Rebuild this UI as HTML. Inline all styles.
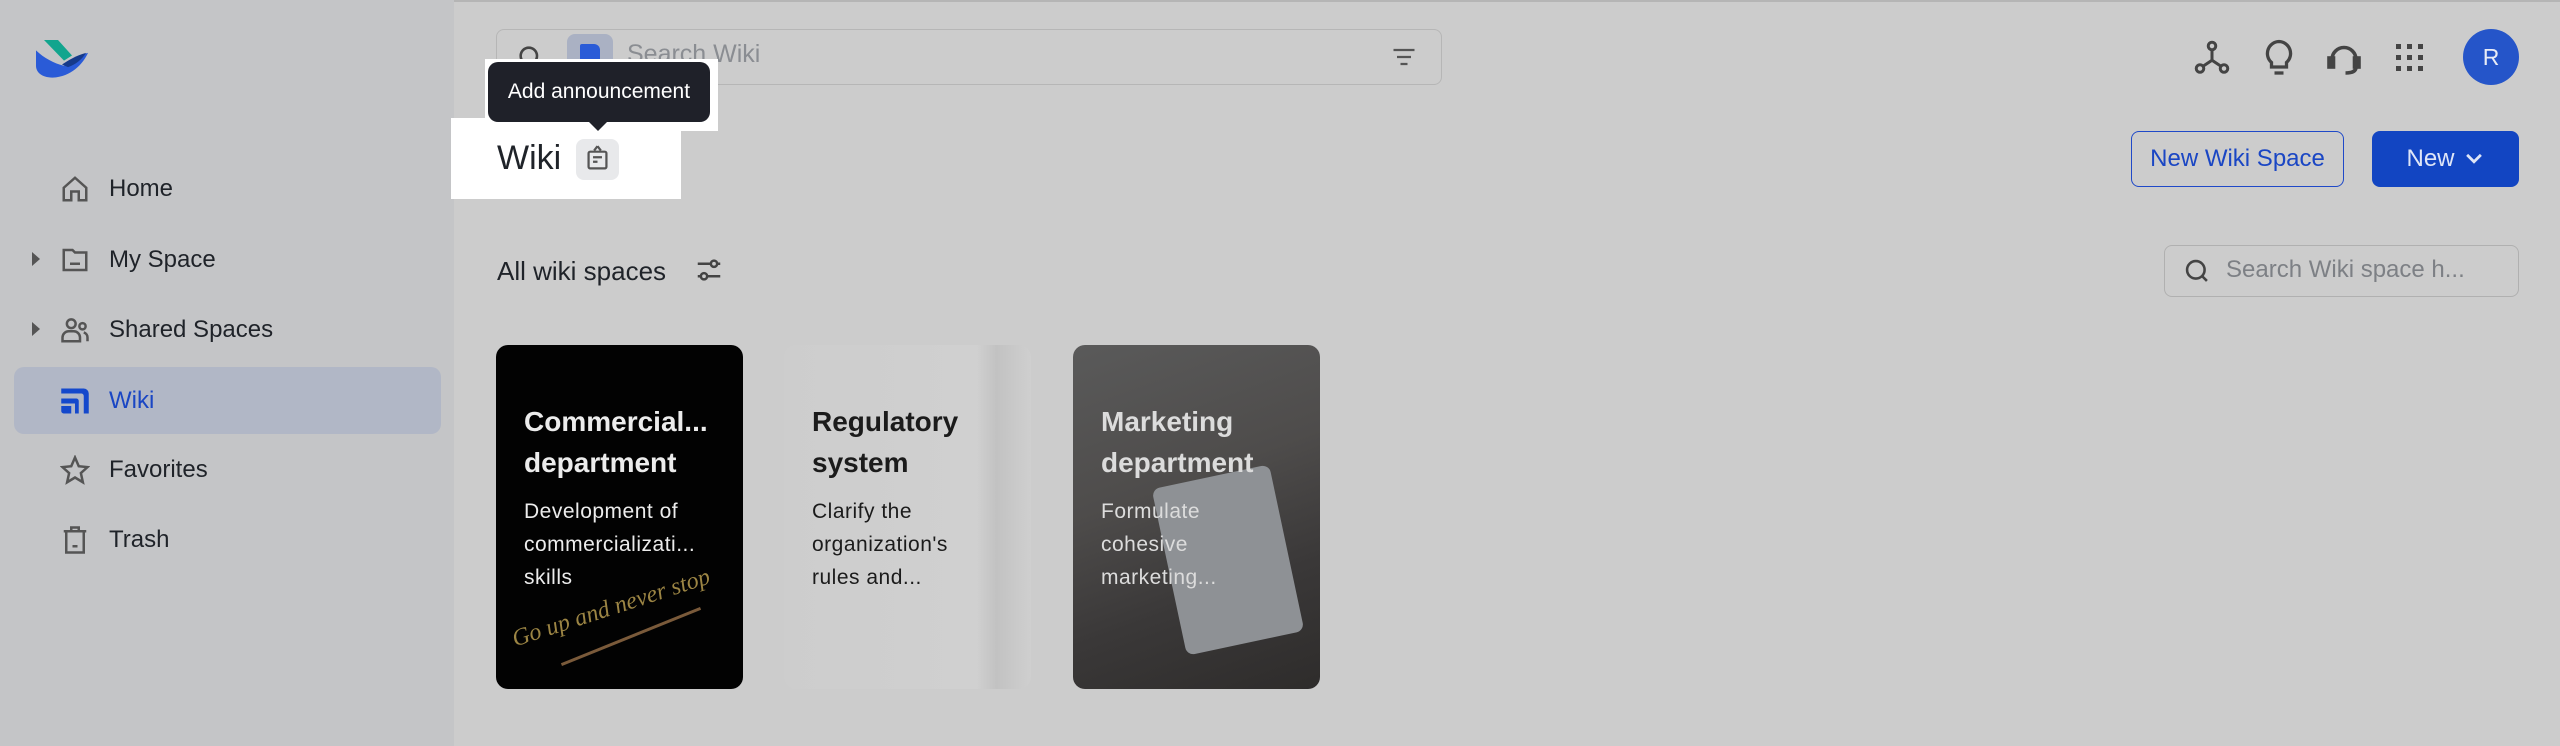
<!DOCTYPE html>
<html><head><meta charset="utf-8"><style>
*{box-sizing:border-box;margin:0;padding:0}
body{width:2560px;height:746px;overflow:hidden;background:#cccccc;font-family:"Liberation Sans",sans-serif;position:relative;color:#1f2329}
.abs{position:absolute}
#side{left:0;top:0;width:454px;height:746px;background:#c4c5c7}
.topline{left:0;top:0;width:2560px;height:2px;background:#b5b5b5}
.nav{position:absolute;left:0;width:454px;height:67px;display:flex;align-items:center;font-size:24px;color:#1f2329}
.nav .ic{position:absolute;left:60px;top:50%;transform:translateY(-50%);width:30px;height:30px}
.nav span{position:absolute;left:109px}
.arrow{position:absolute;left:32px;width:0;height:0;border-top:7px solid transparent;border-bottom:7px solid transparent;border-left:8px solid #555}
.card{position:absolute;top:345px;width:247px;height:344px;border-radius:12px;overflow:hidden;padding:56px 28px 0}
.card h3{font-size:28px;font-weight:bold;line-height:41px;margin-bottom:12px}
.card p{font-size:21px;line-height:33px;letter-spacing:.5px}
</style></head><body>
<div class="abs topline"></div>
<div id="side" class="abs">
 <svg class="abs" style="left:36px;top:40px" width="52" height="40" viewBox="0 0 52 62" preserveAspectRatio="none"><path d="M8 0h14l14 24 -8 8z" fill="#12a58e"/><path d="M0 16c8 12 18 20 28 24l8-6c4-6 10-12 16-14-4 14-14 34-32 38C6 60 0 50 0 40z" fill="#2a5bd7"/><path d="M26 38c6-6 14-14 24-18-4 10-10 18-18 22z" fill="#163a8a"/></svg>
 <div class="nav" style="top:155px"><svg class="ic" viewBox="0 0 24 24" fill="none" stroke="#555" stroke-width="2"><path d="M3 11l9-8 9 8v10h-6v-7H9v7H3z"/></svg><span>Home</span></div>
 <div class="nav" style="top:226px"><i class="arrow" style="top:26px"></i><svg class="ic" viewBox="0 0 24 24" fill="none" stroke="#555" stroke-width="2"><path d="M3 4h7l2 2h9v14H3z"/><path d="M8 15h8"/></svg><span>My Space</span></div>
 <div class="nav" style="top:296px"><i class="arrow" style="top:26px"></i><svg class="ic" viewBox="0 0 24 24" fill="none" stroke="#555" stroke-width="2"><circle cx="9" cy="7" r="3.5"/><path d="M2 21v-3a5 5 0 0 1 5-5h4a5 5 0 0 1 5 5v3z"/><circle cx="18" cy="9" r="2.5"/><path d="M19 14a4 4 0 0 1 3 4v3"/></svg><span>Shared Spaces</span></div>
 <div class="abs" style="left:14px;top:367px;width:427px;height:67px;background:#b1b7c6;border-radius:10px"></div>
 <div class="nav" style="top:367px;color:#1a46c4"><svg class="ic" viewBox="0 0 24 24"><path d="M1 2h18a4 4 0 0 1 4 4v16h-4V8a2 2 0 0 0-2-2H1z M1 10h12a2 2 0 0 1 2 2v10h-3V14H1z M1 16h8v6H3a2 2 0 0 1-2-2z" fill="#1448cc"/></svg><span>Wiki</span></div>
 <div class="nav" style="top:436px"><svg class="ic" viewBox="0 0 24 24" fill="none" stroke="#555" stroke-width="2"><path d="M12 2l3 7 7 .7-5.3 4.8 1.6 7.3L12 18l-6.3 3.8 1.6-7.3L2 9.7 9 9z"/></svg><span>Favorites</span></div>
 <div class="nav" style="top:506px"><svg class="ic" viewBox="0 0 24 24" fill="none" stroke="#555" stroke-width="2"><path d="M3 5h18M9 5V2h6v3M5 5v17h14V5M10 17h4"/></svg><span>Trash</span></div>
</div>

<!-- search bar -->
<div class="abs" style="left:496px;top:29px;width:946px;height:56px;border:1.5px solid #b6b6b6;border-radius:8px"></div>
<svg class="abs" style="left:516px;top:43px" width="28" height="28" viewBox="0 0 24 24" fill="none" stroke="#444" stroke-width="2.2"><circle cx="11" cy="11" r="7"/><path d="M16 16l5 5"/></svg>
<div class="abs" style="left:567px;top:34px;width:46px;height:46px;background:#aab1c3;border-radius:8px"></div>
<div class="abs" style="left:580px;top:44px;width:20px;height:26px;background:#2a5bd7;border-radius:2px 6px 2px 2px"></div>
<div class="abs" style="left:627px;top:40px;font-size:25px;color:#8a8d92">Search Wiki</div>
<svg class="abs" style="left:1390px;top:43px" width="28" height="28" viewBox="0 0 24 24" stroke="#555" stroke-width="2"><path d="M3 6h18M6 12h12M9 18h6"/></svg>

<!-- spotlight -->
<div class="abs" style="left:451px;top:118px;width:230px;height:81px;background:#fff"></div>
<div class="abs" style="left:485px;top:59px;width:233px;height:72px;background:#fff"></div>
<div class="abs" style="left:488px;top:62px;width:222px;height:60px;background:#1f2129;border-radius:10px;color:#fff;font-size:21px;display:flex;align-items:center;justify-content:center">Add announcement</div>
<div class="abs" style="left:588px;top:121px;width:0;height:0;border-left:10px solid transparent;border-right:10px solid transparent;border-top:10px solid #1f2129"></div>
<div class="abs" style="left:497px;top:139px;font-size:34px;color:#1f2329">Wiki</div>
<div class="abs" style="left:576px;top:139px;width:43px;height:41px;background:#e8e9eb;border-radius:8px"></div>
<svg class="abs" style="left:585px;top:145px" width="25" height="29" viewBox="0 0 20 26" fill="none" stroke="#555" stroke-width="2"><path d="M10 1l-3 4M10 1l3 4"/><rect x="2" y="6" width="16" height="15" rx="1.5"/><path d="M6 11h8M6 15h4"/></svg>

<!-- top right icons -->
<svg class="abs" style="left:2194px;top:40px" width="36" height="36" viewBox="0 0 24 24" fill="none" stroke="#444" stroke-width="2"><circle cx="12" cy="4" r="2.5"/><circle cx="4" cy="19" r="2.5"/><circle cx="20" cy="19" r="2.5"/><path d="M12 6.5v7M12 13.5L6 17.5M12 13.5l6 4"/></svg>
<svg class="abs" style="left:2261px;top:38px" width="36" height="40" viewBox="0 0 24 26" fill="none" stroke="#444" stroke-width="2.2"><path d="M12 2a8 8 0 0 0-5 14v3h10v-3A8 8 0 0 0 12 2z"/><path d="M9 23h6"/></svg>
<svg class="abs" style="left:2326px;top:40px" width="36" height="36" viewBox="0 0 24 24" fill="none" stroke="#444" stroke-width="2.4"><path d="M4 13a8 8 0 0 1 16 0"/><rect x="2" y="12" width="3" height="6" fill="#444"/><rect x="19" y="12" width="3" height="6" fill="#444"/><path d="M20 18c0 3-3 4-7 4"/></svg>
<svg class="abs" style="left:2395px;top:43px" width="30" height="30" viewBox="0 0 30 30" fill="#444"><rect x="1" y="1" width="5" height="5"/><rect x="12" y="1" width="5" height="5"/><rect x="23" y="1" width="5" height="5"/><rect x="1" y="12" width="5" height="5"/><rect x="12" y="12" width="5" height="5"/><rect x="23" y="12" width="5" height="5"/><rect x="1" y="23" width="5" height="5"/><rect x="12" y="23" width="5" height="5"/><rect x="23" y="23" width="5" height="5"/></svg>
<div class="abs" style="left:2463px;top:29px;width:56px;height:56px;border-radius:50%;background:#2555c9;color:#e8ecf6;font-size:23px;display:flex;align-items:center;justify-content:center">R</div>

<div class="abs" style="left:2131px;top:131px;width:213px;height:56px;border:1.5px solid #1f49c8;border-radius:8px;color:#1a46c4;font-size:24px;display:flex;align-items:center;justify-content:center">New Wiki Space</div>
<div class="abs" style="left:2372px;top:131px;width:147px;height:56px;background:#1245c2;border-radius:8px;color:#dfe6f7;font-size:24px;display:flex;align-items:center;justify-content:center">New <svg width="22" height="14" viewBox="0 0 16 10" style="margin-left:8px" fill="none" stroke="#dfe6f7" stroke-width="2"><path d="M3 2l5 5 5-5"/></svg></div>

<div class="abs" style="left:497px;top:256px;font-size:26px;color:#1f2329">All wiki spaces</div>
<svg class="abs" style="left:694px;top:255px" width="30" height="30" viewBox="0 0 24 24" fill="none" stroke="#444" stroke-width="2"><path d="M3 7h10M19 7h2M3 17h2M11 17h10"/><circle cx="16" cy="7" r="2.5"/><circle cx="8" cy="17" r="2.5"/></svg>

<div class="abs" style="left:2164px;top:245px;width:355px;height:52px;border:1.5px solid #b0b0b0;border-radius:8px"></div>
<svg class="abs" style="left:2183px;top:257px" width="28" height="28" viewBox="0 0 24 24" fill="none" stroke="#444" stroke-width="2.2"><circle cx="11" cy="11" r="7.5"/><path d="M16.5 16.5l4 4"/></svg>
<div class="abs" style="left:2226px;top:256px;font-size:24px;color:#7d8085">Search Wiki space h...</div>

<!-- cards -->
<div class="card" style="left:496px;background:#020202;color:#ececec">
 <h3>Commercial...<br>department</h3>
 <p>Development of<br>commercializati...<br>skills</p>
 <div class="abs" style="left:12px;top:250px;font-size:24px;color:#9c8544;font-style:italic;transform:rotate(-18deg);font-family:'Liberation Serif',serif">Go up and never stop</div>
 <div class="abs" style="left:60px;top:290px;width:150px;height:3px;background:#7a5a3a;transform:rotate(-22deg)"></div>
</div>
<div class="card" style="left:784px;background:linear-gradient(90deg,#cdcdcd 0%,#d0d0d0 78%,#c2c2c2 86%,#cfcfcf 100%);color:#1b1b1b">
 <h3>Regulatory<br>system</h3>
 <p>Clarify the<br>organization's<br>rules and...</p>
</div>
<div class="card" style="left:1073px;background:linear-gradient(160deg,#5a5a5a 0%,#4e4c4b 40%,#3a3838 70%,#2e2c2b 100%);color:#dcdcdc">
 <div class="abs" style="left:95px;top:130px;width:120px;height:170px;background:#8e9195;transform:rotate(-12deg);border-radius:8px"></div>
 <div style="position:relative"><h3>Marketing<br>department</h3>
 <p>Formulate<br>cohesive<br>marketing...</p></div>
</div>
</body></html>
